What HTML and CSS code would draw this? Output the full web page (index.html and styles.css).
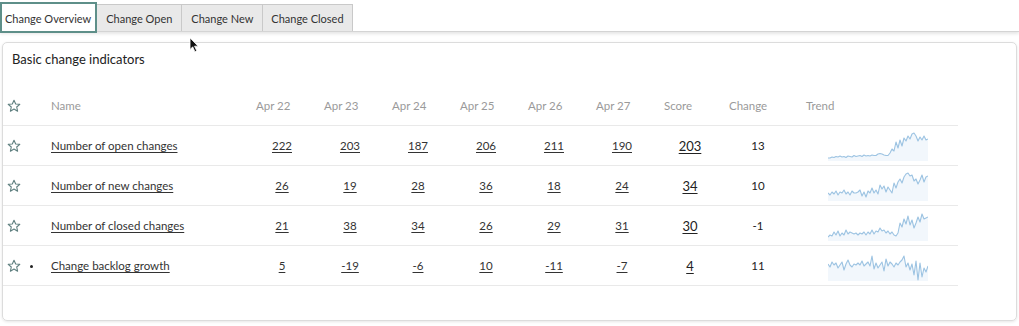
FILE: index.html
```
<!DOCTYPE html>
<html>
<head>
<meta charset="utf-8">
<link rel="stylesheet" href="styles.css">
</head>
<body>
<div class="tabs">
  <div class="tab active">Change Overview</div>
  <div class="tab">Change Open</div>
  <div class="tab">Change New</div>
  <div class="tab">Change Closed</div>
</div>
<div class="card">
  <div class="card-title">Basic change indicators</div>
  <table class="grid">
    <colgroup>
      <col class="c-star"><col class="c-name">
      <col class="c-num"><col class="c-num"><col class="c-num"><col class="c-num"><col class="c-num"><col class="c-num">
      <col class="c-num"><col class="c-num"><col class="c-trend">
    </colgroup>
    <thead>
      <tr>
        <th class="star-cell"><svg class="star" viewBox="0 0 14 14"><path d="M7 1.2 L8.7 5 L12.8 5.3 L9.7 8 L10.6 12.2 L7 10 L3.4 12.2 L4.3 8 L1.2 5.3 L5.3 5 Z"/></svg></th>
        <th>Name</th>
        <th>Apr 22</th><th>Apr 23</th><th>Apr 24</th><th>Apr 25</th><th>Apr 26</th><th>Apr 27</th>
        <th>Score</th><th class="h-change">Change</th><th class="h-trend">Trend</th>
      </tr>
    </thead>
    <tbody>
      <tr>
        <td class="star-cell"><svg class="star" viewBox="0 0 14 14"><path d="M7 1.2 L8.7 5 L12.8 5.3 L9.7 8 L10.6 12.2 L7 10 L3.4 12.2 L4.3 8 L1.2 5.3 L5.3 5 Z"/></svg></td>
        <td class="name"><a>Number of open changes</a></td>
        <td><a>222</a></td><td><a>203</a></td><td><a>187</a></td><td><a>206</a></td><td><a>211</a></td><td><a>190</a></td>
        <td class="score"><a>203</a></td><td class="chg">13</td>
        <td class="trend"><svg class="spark" viewBox="0 0 100 30" width="100" height="30">
          <polygon class="area" points="0,27 2,27 4,26 6,26.5 8,25.5 10,26 12,25 14,26 16,25.5 18,26.5 20,25 22,25.5 24,26 26,24.5 28,25.5 30,25 32,24.5 34,25.5 36,24 38,25 40,24.5 42,25 44,24 46,24.5 48,24.5 50,23 52,22.5 54,23 56,24 58,24.5 60,24.5 62,22 64,18 66,20 68,11 70,17 72,9 74,15 76,7 78,10 80,5 82,8 84,3 86,2 88,5 90,10 92,6 94,9 96,5 98,9 100,8 100,30 0,30"/>
          <polyline class="line" points="0,27 2,27 4,26 6,26.5 8,25.5 10,26 12,25 14,26 16,25.5 18,26.5 20,25 22,25.5 24,26 26,24.5 28,25.5 30,25 32,24.5 34,25.5 36,24 38,25 40,24.5 42,25 44,24 46,24.5 48,24.5 50,23 52,22.5 54,23 56,24 58,24.5 60,24.5 62,22 64,18 66,20 68,11 70,17 72,9 74,15 76,7 78,10 80,5 82,8 84,3 86,2 88,5 90,10 92,6 94,9 96,5 98,9 100,8"/>
        </svg></td>
      </tr>
      <tr>
        <td class="star-cell"><svg class="star" viewBox="0 0 14 14"><path d="M7 1.2 L8.7 5 L12.8 5.3 L9.7 8 L10.6 12.2 L7 10 L3.4 12.2 L4.3 8 L1.2 5.3 L5.3 5 Z"/></svg></td>
        <td class="name"><a>Number of new changes</a></td>
        <td><a>26</a></td><td><a>19</a></td><td><a>28</a></td><td><a>36</a></td><td><a>18</a></td><td><a>24</a></td>
        <td class="score"><a>34</a></td><td class="chg">10</td>
        <td class="trend"><svg class="spark" viewBox="0 0 100 30" width="100" height="30">
          <polygon class="area" points="0,22 2,24 4,21 6,23 8,20 10,24 12,21 14,22 16,19 18,23 20,21 22,24 24,20 26,22 28,22 30,21 32,19 34,25 36,21 38,26 40,20 42,22 44,17 46,22 48,19 50,23 52,14 54,18 56,15 58,21 60,16 62,19 64,22 66,12 68,17 70,11 72,8 74,12 76,6 78,3 80,2 82,5 84,4 86,10 88,8 90,13 92,9 94,4 96,11 98,6 100,5 100,30 0,30"/>
          <polyline class="line" points="0,22 2,24 4,21 6,23 8,20 10,24 12,21 14,22 16,19 18,23 20,21 22,24 24,20 26,22 28,22 30,21 32,19 34,25 36,21 38,26 40,20 42,22 44,17 46,22 48,19 50,23 52,14 54,18 56,15 58,21 60,16 62,19 64,22 66,12 68,17 70,11 72,8 74,12 76,6 78,3 80,2 82,5 84,4 86,10 88,8 90,13 92,9 94,4 96,11 98,6 100,5"/>
        </svg></td>
      </tr>
      <tr>
        <td class="star-cell"><svg class="star" viewBox="0 0 14 14"><path d="M7 1.2 L8.7 5 L12.8 5.3 L9.7 8 L10.6 12.2 L7 10 L3.4 12.2 L4.3 8 L1.2 5.3 L5.3 5 Z"/></svg></td>
        <td class="name"><a>Number of closed changes</a></td>
        <td><a>21</a></td><td><a>38</a></td><td><a>34</a></td><td><a>26</a></td><td><a>29</a></td><td><a>31</a></td>
        <td class="score"><a>30</a></td><td class="chg">-1</td>
        <td class="trend"><svg class="spark" viewBox="0 0 100 30" width="100" height="30">
          <polygon class="area" points="0,26 2,24 4,25 6,21 8,24 10,20 12,25 14,22 16,24 18,19 20,23 22,21 24,22 26,23 28,22 30,24 32,22 34,23 36,21 38,24 40,21 42,23 44,19 46,23 48,20 50,21 52,17 54,20 56,19 58,22 60,20 62,23 64,21 66,24 68,25 70,22 72,12 74,16 76,8 78,13 80,5 82,14 84,9 86,17 88,12 90,6 92,11 94,3 96,8 98,7 100,6 100,30 0,30"/>
          <polyline class="line" points="0,26 2,24 4,25 6,21 8,24 10,20 12,25 14,22 16,24 18,19 20,23 22,21 24,22 26,23 28,22 30,24 32,22 34,23 36,21 38,24 40,21 42,23 44,19 46,23 48,20 50,21 52,17 54,20 56,19 58,22 60,20 62,23 64,21 66,24 68,25 70,22 72,12 74,16 76,8 78,13 80,5 82,14 84,9 86,17 88,12 90,6 92,11 94,3 96,8 98,7 100,6"/>
        </svg></td>
      </tr>
      <tr>
        <td class="star-cell"><svg class="star" viewBox="0 0 14 14"><path d="M7 1.2 L8.7 5 L12.8 5.3 L9.7 8 L10.6 12.2 L7 10 L3.4 12.2 L4.3 8 L1.2 5.3 L5.3 5 Z"/></svg><span class="dot"></span></td>
        <td class="name"><a>Change backlog growth</a></td>
        <td><a>5</a></td><td><a>-19</a></td><td><a>-6</a></td><td><a>10</a></td><td><a>-11</a></td><td><a>-7</a></td>
        <td class="score"><a>4</a></td><td class="chg">11</td>
        <td class="trend"><svg class="spark" viewBox="0 0 100 30" width="100" height="30">
          <polygon class="area" points="0,13 2,16 4,11 6,14 8,12 10,17 12,14 14,11 16,19 18,13 20,9 22,14 24,16 26,13 28,14 30,12 32,14 34,10 36,15 38,13 40,11 42,15 44,5 46,18 48,12 50,17 52,14 54,11 56,20 58,8 60,15 62,11 64,13 66,16 68,12 70,14 72,11 74,9 76,5 78,16 80,12 82,19 84,13 86,24 88,10 90,29 92,12 94,26 96,17 98,21 100,15 100,30 0,30"/>
          <polyline class="line" points="0,13 2,16 4,11 6,14 8,12 10,17 12,14 14,11 16,19 18,13 20,9 22,14 24,16 26,13 28,14 30,12 32,14 34,10 36,15 38,13 40,11 42,15 44,5 46,18 48,12 50,17 52,14 54,11 56,20 58,8 60,15 62,11 64,13 66,16 68,12 70,14 72,11 74,9 76,5 78,16 80,12 82,19 84,13 86,24 88,10 90,29 92,12 94,26 96,17 98,21 100,15"/>
        </svg></td>
      </tr>
    </tbody>
  </table>
</div>
<svg class="cursor" viewBox="0 0 12 18" width="11" height="16"><path d="M1 1 L1 14 L4 11 L6.5 16.5 L8.5 15.6 L6 10.3 L10 10.3 Z" fill="#111" stroke="#fff" stroke-width="0.8"/></svg>
</body>
</html>
```
FILE: styles.css
```
html, body {
  margin: 0;
  padding: 0;
  background: #fff;
}
body {
  font-family: "Lato", "Liberation Sans", sans-serif;
  color: #333;
  font-size: 12px;
  width: 1019px;
  height: 326px;
  overflow: hidden;
  position: relative;
}
.tabs {
  display: flex;
  align-items: flex-end;
  height: 31px;
  border-bottom: 1px solid #d4d4d4;
  box-shadow: 0 2px 3px rgba(0,0,0,0.10);
}
.tab {
  height: 27px;
  box-sizing: border-box;
  padding: 1px 9px 0;
  display: flex;
  align-items: center;
  background: #e9e9e9;
  border: 1px solid #c9c9c9;
  border-bottom: none;
  border-left: none;
  color: #333;
  font-size: 11px;
  white-space: nowrap;
}
.tab:last-child {
  padding: 1px 8px 0 8px;
}
.tab.active {
  height: 31px;
  background: #fff;
  border: 2px solid #5e8f89;
  padding: 2px 4px 0 3px;
  margin-bottom: -2px;
  position: relative;
  z-index: 1;
}
.card {
  margin: 10px 2px 0 2px;
  height: 279px;
  box-sizing: border-box;
  border: 1px solid #dcdcdc;
  border-radius: 5px;
  box-shadow: 0 1px 3px rgba(0,0,0,0.10);
}
.card-title {
  padding: 6px 9px 0;
  height: 20px;
  line-height: 20px;
  font-size: 13px;
  color: #222;
}
.grid {
  margin-top: 17px;
  border-collapse: collapse;
  table-layout: fixed;
  width: 955px;
}
.c-star { width: 40px; }
.c-name { width: 205px; }
.c-num { width: 68px; }
.c-trend { width: 166px; }
.grid th, .grid td {
  height: 39px;
  padding: 0;
  border-bottom: 1px solid #e9e9e9;
  vertical-align: middle;
  white-space: nowrap;
}
.grid th {
  text-align: left;
  padding-left: 8px;
  font-weight: normal;
  color: #9a9a9a;
  font-size: 11.5px;
}
.grid th.h-change { padding-left: 5px; }
.grid th.h-trend { padding-left: 14px; }
.grid td {
  text-align: center;
  font-size: 11.5px;
  color: #333;
}
.grid td a {
  color: #333;
  text-decoration: underline;
  text-underline-offset: 2px;
}
.grid .star-cell {
  padding-left: 4px;
  text-align: left;
}
.star {
  width: 14px;
  height: 14px;
  vertical-align: middle;
  fill: none;
  stroke: #5e7f7f;
  stroke-width: 1.1;
  stroke-linejoin: round;
}
.dot {
  display: inline-block;
  width: 3px;
  height: 3px;
  border-radius: 50%;
  background: #222;
  margin-left: 9px;
  vertical-align: middle;
}
.grid td.name {
  text-align: left;
  padding-left: 8px;
}
.grid td.score a {
  font-size: 13px;
  color: #222;
}
.grid td.chg {
  color: #222;
}
.grid td.trend {
  text-align: left;
  padding-left: 36px;
}
.spark {
  display: block;
}
.spark .area {
  fill: #f2f7fc;
  stroke: none;
}
.spark .line {
  fill: none;
  stroke: #9cc3e2;
  stroke-width: 1.1;
  stroke-linejoin: round;
}
.cursor {
  position: absolute;
  left: 189px;
  top: 37px;
}
```
